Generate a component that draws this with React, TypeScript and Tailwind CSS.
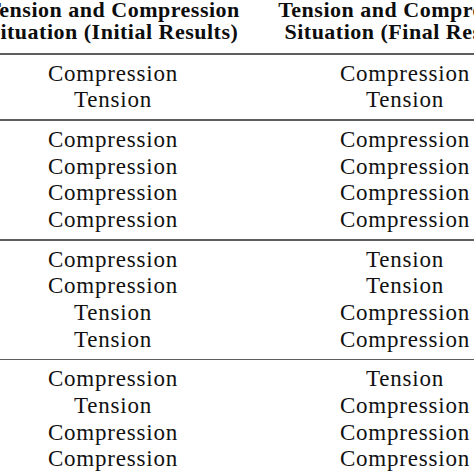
const groups: [string, string][][] = [
  [
    ["Compression", "Compression"],
    ["Tension", "Tension"],
  ],
  [
    ["Compression", "Compression"],
    ["Compression", "Compression"],
    ["Compression", "Compression"],
    ["Compression", "Compression"],
  ],
  [
    ["Compression", "Tension"],
    ["Compression", "Tension"],
    ["Tension", "Compression"],
    ["Tension", "Compression"],
  ],
  [
    ["Compression", "Tension"],
    ["Tension", "Compression"],
    ["Compression", "Compression"],
    ["Compression", "Compression"],
  ],
];

function Rule() {
  return <div className="h-[1.5px] bg-[#5e5e5e]" />;
}

export default function App() {
  return (
    <div className="w-[474px] h-[474px] overflow-hidden bg-white">
      <div
        className="ml-[-33px] w-[584px] text-[#111]"
        style={{ fontFamily: '"Liberation Serif", "Times New Roman", serif' }}
      >
        <div className="grid grid-cols-2 h-[54px] font-bold text-[22px] leading-[22px] tracking-[0.5px] text-[#0d0d0d] text-center -mt-[1px]">
          <div>
            <div>Tension and Compression</div>
            <div>Situation (Initial Results)</div>
          </div>
          <div>
            <div>Tension and Compression</div>
            <div>Situation (Final Results)</div>
          </div>
        </div>
        {groups.map((rows, gi) => (
          <div key={gi}>
            <Rule />
            <div className="pt-[6px] pb-[5.5px]">
              {rows.map(([a, b], ri) => (
                <div
                  key={ri}
                  className="grid grid-cols-2 text-center text-[23px] leading-[26.67px] tracking-[0.8px]"
                >
                  <div>{a}</div>
                  <div>{b}</div>
                </div>
              ))}
            </div>
          </div>
        ))}
      </div>
    </div>
  );
}
